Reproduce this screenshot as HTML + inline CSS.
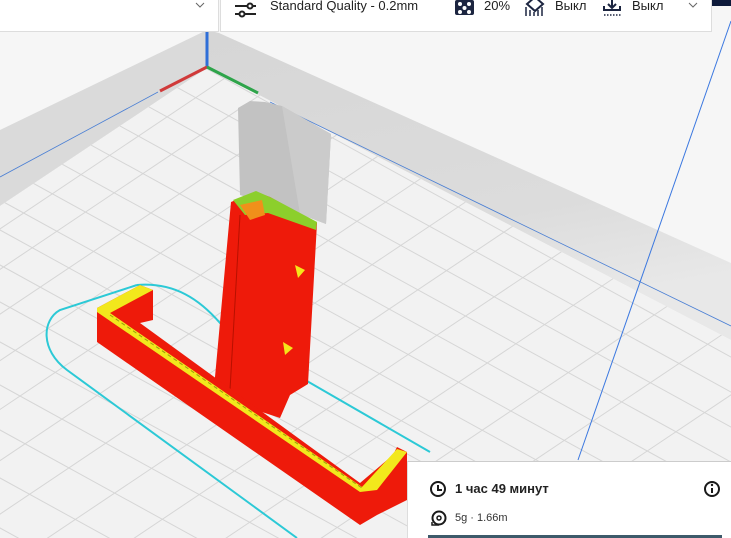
<!DOCTYPE html>
<html style="overflow:hidden"><head><meta charset="utf-8"><style>
*{box-sizing:border-box}
html,body{margin:0;width:731px;height:538px;overflow:hidden}
body{background:#f3f3f3;font-family:"Liberation Sans",sans-serif;position:relative}
.t{position:absolute;font-size:13px;line-height:16px;color:#222;white-space:nowrap}
</style></head><body>
<svg width="731" height="538" style="position:absolute;left:0;top:0;display:block">
<defs>
<clipPath id="fl"><polygon points="0,206 207,68 731,340 731,538 0,538"/></clipPath>
<linearGradient id="rw" x1="0" y1="0" x2="0.3" y2="1"><stop offset="0" stop-color="#d6d6d6"/><stop offset="0.7" stop-color="#dcdcdc"/><stop offset="1" stop-color="#e8e8e8"/></linearGradient>
</defs>
<rect width="731" height="538" fill="#f6f6f6"/>
<polygon points="207,30 219,33 731,263 731,340 207,68" fill="url(#rw)"/>
<polygon points="0,130 207,30 207,68 0,206" fill="#dadada"/>
<polygon points="0,206 207,68 731,340 731,538 0,538" fill="#f2f2f2"/>
<g clip-path="url(#fl)" stroke="#d6d6d6" stroke-width="1">
<path d="M-400,-20 L800,640 M-400,10 L800,670 M-400,45 L800,705 M-400,82 L800,742 M-400,122 L800,782 M-400,165 L800,825 M-400,210 L800,870 M-400,258 L800,918 M-400,308 L800,968 M-400,360 L800,1020 M-400,415 L800,1075 M-400,-55 L800,605 M-400,-90 L800,570 M-400,-125 L800,535 M-400,-160 L800,500 M-400,-195 L800,465 M-400,-230 L800,430 M-400,-265 L800,395 M-400,-300 L800,360 M-400,-335 L800,325 M-400,-370 L800,290 M-400,-405 L800,255 M-400,-440 L800,220 M-400,-475 L800,185 M-400,-510 L800,150"/>
<path d="M240,68 L-300,430 M275,85 L-265,447 M312,105 L-228,467 M350,126 L-190,488 M390,148 L-150,510 M432,171 L-108,533 M476,195 L-64,557 M522,220 L-18,582 M570,246 L30,608 M620,274 L80,636 M672,303 L132,665 M726,332 L186,694 M780,362 L240,724 M836,393 L296,755 M894,425 L354,787 M954,458 L414,820 M1016,492 L476,854 M1080,527 L540,889"/>
</g>
<line x1="0" y1="177" x2="158" y2="92" stroke="#4a7fd4" stroke-width="0.8"/>
<line x1="270" y1="102" x2="731" y2="326" stroke="#4a7fd4" stroke-width="0.8"/>
<line x1="731" y1="21" x2="578" y2="460" stroke="#3b78e0" stroke-width="1"/>
<line x1="207" y1="32" x2="207" y2="67" stroke="#2f6fd8" stroke-width="3"/>
<line x1="207" y1="67" x2="160" y2="91" stroke="#d03a3a" stroke-width="3"/>
<line x1="207" y1="67" x2="258" y2="93" stroke="#2ea44a" stroke-width="3"/>
<path d="M137,285 C175,282 200,300 220,323 L300,377 L430,452 M67,370 C40,350 42,320 60,310 L137,285 M67,370 L297,538" fill="none" stroke="#2cc9d6" stroke-width="2"/>
<polygon points="238,108 250,101 265,102 282,106 331,134 326,224 300,214 240,195" fill="#c2c2c2"/>
<polygon points="282,106 331,134 326,224 300,214" fill="#cbcbcb"/>
<polygon points="231,202 256,192 270,197 317,223 308,384 290,395 280,418 262,412 214,388" fill="#ee1a0a"/>
<polygon points="233,200 256,191 272,198 317,222 316,230 268,213 245,215" fill="#8ccf2c"/>
<polygon points="240,205 262,200 265,215 250,220" fill="#f0901a"/>
<polygon points="295,265 305,270 298,278" fill="#f5e51a"/>
<polygon points="283,342 293,348 285,355" fill="#f5e51a"/>
<line x1="240" y1="215" x2="230" y2="390" stroke="#b81000" stroke-width="1"/>
<polygon points="97,308 140,285 153,290 153,320 140,323 360,483 393,455 397,447 407,452 407,500 377,515 360,525 97,342" fill="#ee1a0a"/>
<polygon points="97,308 140,285 153,290 110,313 362,487 397,449 407,452 377,490 360,492 97,312" fill="#f2e81c"/>
<line x1="110" y1="315" x2="362" y2="488" stroke="#9a9a10" stroke-width="1" stroke-dasharray="4 3"/>
</svg>
<div style="position:absolute;left:0;top:0;width:219px;height:32px;background:#fff;border-bottom:1px solid #ddd;border-right:1px solid #ddd"></div>
<div style="position:absolute;left:220px;top:0;width:492px;height:32px;background:#fff;border:1px solid #ddd;border-top:none"></div>
<div style="position:absolute;left:712px;top:0;width:19px;height:6px;background:#0d1a3a"></div>
<svg width="731" height="32" style="position:absolute;left:0;top:0;display:block">
<path d="M196,3 L200,7 L204,3" fill="none" stroke="#666" stroke-width="1"/>
<path d="M689,3 L693,7 L697,3" fill="none" stroke="#666" stroke-width="1"/>
<g stroke="#222" stroke-width="2" fill="#fff"><line x1="235" y1="6" x2="256" y2="6"/><line x1="235" y1="14" x2="256" y2="14"/><circle cx="250" cy="6" r="2.5"/><circle cx="242" cy="14" r="2.5"/></g>
<rect x="455" y="0" width="19" height="15" rx="2" fill="#1c2540"/>
<g fill="#fff"><circle cx="460" cy="4" r="2"/><circle cx="469" cy="4" r="2"/><circle cx="464.5" cy="8" r="2"/><circle cx="460" cy="12" r="2"/><circle cx="469" cy="12" r="2"/></g>
<path d="M527,4 L535,-3 L543,4 L535,11 Z" fill="none" stroke="#1c2540" stroke-width="2"/>
<path d="M526,7 L526,16 M530,10 L530,16 M534,12 L534,16 M538,10 L538,16 M542,7 L542,16" stroke="#1c2540" stroke-width="1.5"/>
<path d="M612,-2 L612,7 M608,4 L612,8 L616,4 M604,6 L604,10 L620,10 L620,6" fill="none" stroke="#1c2540" stroke-width="2"/>
<path d="M604,15 L621,15" stroke="#1c2540" stroke-width="1.5" stroke-dasharray="1.5 1.5"/>
</svg>
<div class="t" style="left:270px;top:-2px">Standard Quality - 0.2mm</div>
<div class="t" style="left:484px;top:-2px">20%</div>
<div class="t" style="left:555px;top:-2px">Выкл</div>
<div class="t" style="left:632px;top:-2px">Выкл</div>
<div style="position:absolute;left:407px;top:461px;width:324px;height:77px;background:#fff;border-top:1px solid #ccc;border-left:1px solid #ddd"></div>
<div style="position:absolute;left:428px;top:535px;width:294px;height:3px;background:#3d5a6a"></div>
<svg width="731" height="538" style="position:absolute;left:0;top:0;display:block">
<circle cx="438" cy="489" r="7" fill="none" stroke="#1a1a1a" stroke-width="2"/>
<path d="M438,485 L438,490 L442,490" fill="none" stroke="#1a1a1a" stroke-width="2"/>
<circle cx="712" cy="489" r="7" fill="none" stroke="#1a1a1a" stroke-width="2"/>
<line x1="712" y1="488" x2="712" y2="493" stroke="#1a1a1a" stroke-width="2"/><circle cx="712" cy="485" r="1.2" fill="#1a1a1a"/>
<circle cx="439" cy="518" r="6.5" fill="none" stroke="#1a1a1a" stroke-width="2"/>
<circle cx="439" cy="518" r="2" fill="none" stroke="#1a1a1a" stroke-width="1.5"/>
<path d="M432,522 L432,525 L439,525" fill="none" stroke="#1a1a1a" stroke-width="1.5"/>
</svg>
<div class="t" style="left:455px;top:481px;font-weight:bold;font-size:13px">1 час 49 минут</div>
<div class="t" style="left:455px;top:510px;font-size:11px;color:#333">5g · 1.66m</div>
</body></html>
